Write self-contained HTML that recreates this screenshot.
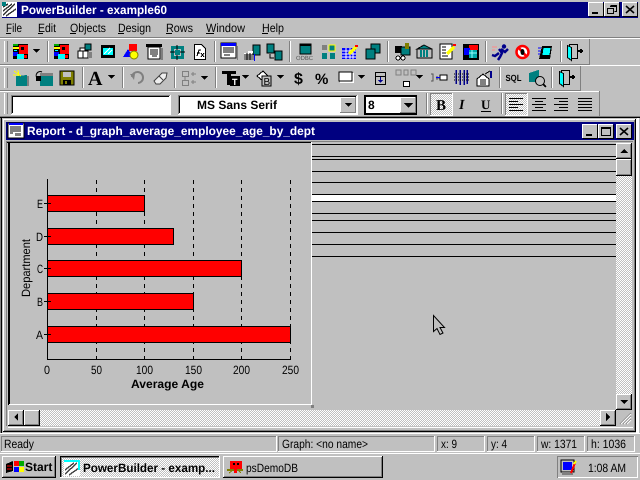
<!DOCTYPE html>
<html><head><meta charset="utf-8"><title>PowerBuilder</title>
<style>
html,body{margin:0;padding:0;background:#c0c0c0;width:640px;height:480px;overflow:hidden}
svg{display:block}
text{font-family:"Liberation Sans",sans-serif;font-size:11px;fill:#000;text-rendering:geometricPrecision}
.b{font-weight:bold}
.r,.t{shape-rendering:crispEdges}
</style></head><body>
<svg xmlns="http://www.w3.org/2000/svg" width="640" height="480" viewBox="0 0 640 480">
<defs>
<pattern id="d" width="2" height="2" patternUnits="userSpaceOnUse"><rect width="2" height="2" fill="#c0c0c0"/><rect width="1" height="1" fill="#fff"/><rect x="1" y="1" width="1" height="1" fill="#fff"/></pattern>
<g id="col"><rect width="15" height="15" fill="#000"/><rect x="6" y="1" width="9" height="9" fill="#f00"/><rect x="0" y="8" width="5" height="4" fill="#00f"/><rect x="4" y="10" width="7" height="5" fill="#0ff"/><rect x="0" y="3" width="6" height="2" fill="#ff0"/><rect x="0" y="0" width="5" height="2" fill="#0a0"/><rect x="8" y="3" width="3" height="3" fill="#000"/><rect x="11" y="11" width="3" height="3" fill="#f00"/><rect x="1" y="6" width="3" height="1" fill="#0ff"/></g>
<path id="ar" d="M0 0h7l-3.500 4z"/>
<g id="door"><rect x="3" y="0" width="9" height="15" fill="#808080"/><rect x="3.500" y=".5" width="8" height="14" fill="#c0c0c0" stroke="#000"/><path d="M1.500 1.500l4 2v13l-4-3z" fill="#0ff" stroke="#000"/><path d="M12 7h5M15 5v4" stroke="#000" stroke-width="2"/></g>
</defs>
<g class="r">
<rect width="640" height="480" fill="#c0c0c0"/>
<rect x="2" y="2" width="636" height="16" fill="#000080"/>
<rect x="2" y="2" width="15" height="15" fill="#fff"/><path d="M3 15L15 4M3 11l9-7M6 16l10-7M3 7l5-3" stroke="#333" stroke-width="1.400"/><rect x="2" y="2" width="4" height="4" fill="#008080"/>
<g><rect x="588" y="2" width="15" height="14" fill="#fff"/><rect x="589" y="3" width="15" height="14" fill="#000"/><rect x="589" y="3" width="14" height="13" fill="#c0c0c0"/><rect x="592" y="12" width="6" height="2" fill="#000"/></g>
<g><rect x="604" y="2" width="15" height="14" fill="#fff"/><rect x="605" y="3" width="15" height="14" fill="#000"/><rect x="605" y="3" width="14" height="13" fill="#c0c0c0"/><path d="M610.500 5.500h6v6h-2M607.500 8.500h6v5h-6zM610 6.500h6" fill="none" stroke="#000"/></g>
<g><rect x="622" y="2" width="15" height="14" fill="#fff"/><rect x="623" y="3" width="15" height="14" fill="#000"/><rect x="623" y="3" width="14" height="13" fill="#c0c0c0"/><path d="M626 6l8 7M634 6l-8 7" stroke="#000" stroke-width="1.600" shape-rendering="auto"/></g>
<rect x="0" y="37" width="640" height="1" fill="#808080"/><rect x="0" y="38" width="640" height="1" fill="#fff"/>
<rect x="589" y="39" width="1" height="26" fill="#808080"/><rect x="0" y="64" width="590" height="1" fill="#808080"/><rect x="0" y="65" width="640" height="1" fill="#fff"/>
<rect x="580" y="66" width="1" height="25" fill="#808080"/><rect x="0" y="90" width="581" height="1" fill="#808080"/><rect x="0" y="91" width="600" height="1" fill="#fff"/>
<rect x="599" y="91" width="1" height="25" fill="#808080"/>
<g><rect x="4" y="41" width="1" height="21" fill="#fff"/><rect x="7" y="41" width="1" height="21" fill="#808080"/><rect x="4" y="68" width="1" height="20" fill="#fff"/><rect x="7" y="68" width="1" height="20" fill="#808080"/><rect x="4" y="93" width="1" height="21" fill="#fff"/><rect x="7" y="93" width="1" height="21" fill="#808080"/></g>
<g fill="#808080"><rect x="47" y="41" width="1" height="21"/><rect x="214" y="41" width="1" height="21"/><rect x="289" y="41" width="1" height="21"/><rect x="387" y="41" width="1" height="21"/><rect x="485" y="41" width="1" height="21"/><rect x="560" y="41" width="1" height="21"/>
<rect x="82" y="67" width="1" height="21"/><rect x="122" y="67" width="1" height="21"/><rect x="174" y="67" width="1" height="21"/><rect x="215" y="67" width="1" height="21"/><rect x="499" y="67" width="1" height="21"/><rect x="551" y="67" width="1" height="21"/>
<rect x="426" y="93" width="1" height="21"/><rect x="501" y="93" width="1" height="21"/></g>
<g fill="#fff"><rect x="48" y="41" width="1" height="21"/><rect x="215" y="41" width="1" height="21"/><rect x="290" y="41" width="1" height="21"/><rect x="388" y="41" width="1" height="21"/><rect x="486" y="41" width="1" height="21"/><rect x="561" y="41" width="1" height="21"/>
<rect x="83" y="67" width="1" height="21"/><rect x="123" y="67" width="1" height="21"/><rect x="175" y="67" width="1" height="21"/><rect x="216" y="67" width="1" height="21"/><rect x="500" y="67" width="1" height="21"/><rect x="552" y="67" width="1" height="21"/>
<rect x="427" y="93" width="1" height="21"/><rect x="502" y="93" width="1" height="21"/></g>
</g>
<g class="r">
<use href="#col" x="13" y="44"/><use href="#ar" x="33" y="49"/>
<use href="#col" x="54" y="44"/>
<g transform="translate(77,44)"><path d="M1 7h5v7H1zM6 7h5v7H6zM3 4h6v3H3z" fill="#fff" stroke="#000"/><rect x="8" y="0" width="6" height="6" fill="#008080" stroke="#000"/><rect x="11" y="8" width="4" height="6" fill="#808080"/></g>
<g transform="translate(101,45)"><rect x="0" y="0" width="14" height="13" fill="#000"/><rect x="2" y="3" width="10" height="7" fill="#0ff"/><path d="M3 9l6-6M7 9l4-4" stroke="#fff"/></g>
<g transform="translate(123,43)"><rect x="6" y="1" width="8" height="7" fill="#f00"/><path d="M0 14l5-8 5 8z" fill="#00f"/><circle cx="11" cy="12" r="4" fill="#ff0" stroke="#808000" shape-rendering="auto"/></g>
<g transform="translate(146,44)"><rect x="0" y="0" width="16" height="3" fill="#000"/><rect x="2" y="3" width="12" height="12" fill="#fff" stroke="#000"/><path d="M4 6h8M4 8h8M4 10h8M6 12h5" stroke="#000"/><rect x="15" y="4" width="2" height="12" fill="#808080"/></g>
<g transform="translate(170,45)"><rect x="1" y="1" width="13" height="13" fill="#008080"/><rect x="4" y="4" width="7" height="7" fill="#c0c0c0"/><path d="M0 7h15M7 0v15" stroke="#000"/><rect x="5" y="5" width="5" height="5" fill="#008080"/></g>
<g transform="translate(194,44)"><path d="M.5.5h7l4 4v11H.5z" fill="#fff" stroke="#000"/><path d="M3 12l2-6h2M3 9h3M7 9l3 4M10 9l-3 4" stroke="#000" fill="none"/></g>
<g transform="translate(221,43)"><rect x="0" y="0" width="15" height="15" fill="#fff" stroke="#000"/><rect x="0" y="0" width="15" height="3" fill="#00f"/><path d="M2 5h11M2 7h11M2 9h11" stroke="#000"/><rect x="3" y="11" width="6" height="2" fill="#808080"/><rect x="16" y="3" width="1" height="14" fill="#808080"/></g>
<g transform="translate(244,44)"><rect x="0" y="9" width="10" height="7" fill="#fff"/><path d="M0 11h10M0 13h10M0 15h10M3 9v7M6 9v7" stroke="#000"/><rect x="9" y="1" width="7" height="10" fill="#008080" stroke="#000"/><rect x="4" y="7" width="5" height="2" fill="#fff"/><rect x="10" y="10" width="1" height="7" fill="#00f"/></g>
<g transform="translate(267,44)"><rect x="0" y="0" width="7" height="9" fill="#008080" stroke="#000"/><rect x="8" y="7" width="7" height="9" fill="#008080" stroke="#000"/><path d="M3 10v4h4" fill="none" stroke="#000"/></g>
<g transform="translate(299,44)"><rect x="1" y="0" width="11" height="10" fill="#008080" stroke="#000"/><rect x="1" y="0" width="11" height="2" fill="#000"/></g>
<g transform="translate(322,44)"><rect x="0" y="1" width="5" height="5" fill="#808080"/><rect x="7" y="1" width="6" height="6" fill="#008080" stroke="#ff0"/><rect x="0" y="9" width="5" height="6" fill="#008080"/><rect x="8" y="9" width="5" height="6" fill="#008080"/></g>
<g transform="translate(342,45)"><rect x="0" y="3" width="14" height="11" fill="#00f"/><path d="M0 6h14M0 9h14M0 12h14M4 3v11M8 3v11M11 3v11" stroke="#fff"/><path d="M7 9l7-7" stroke="#ff0" stroke-width="3"/><rect x="13" y="0" width="3" height="2" fill="#f00"/></g>
<g transform="translate(366,44)"><rect x="5" y="0" width="9" height="9" fill="#008080" stroke="#000"/><rect x="0" y="5" width="9" height="10" fill="#008080" stroke="#000"/></g>
<g transform="translate(395,43)"><rect x="0" y="3" width="7" height="7" fill="#000"/><rect x="6" y="4" width="9" height="8" fill="#008080" stroke="#000"/><rect x="10" y="0" width="4" height="6" fill="#808000"/><circle cx="3" cy="15" r="2" fill="#fff" stroke="#000"/><circle cx="8" cy="15" r="2" fill="#fff" stroke="#000"/></g>
<g transform="translate(417,44)"><path d="M0 5l7-4 8 4z" fill="#008080" stroke="#000"/><rect x="0" y="5" width="15" height="9" fill="#c0c0c0" stroke="#000"/><path d="M4 6v7M7 6v7M10 6v7" stroke="#008080" stroke-width="2"/></g>
<g transform="translate(440,44)"><rect x="0" y="0" width="12" height="15" fill="#fff" stroke="#000"/><path d="M2 3h4M2 6h4M2 9h4M2 12h6" stroke="#000"/><path d="M7 10l7-7" stroke="#ff0" stroke-width="3"/><rect x="13" y="0" width="3" height="2" fill="#f00"/></g>
<g transform="translate(463,44)"><rect width="16" height="16" fill="#000"/><rect x="6" y="1" width="9" height="5" fill="#f00"/><rect x="1" y="4" width="6" height="7" fill="#00f"/><rect x="6" y="6" width="8" height="8" fill="#0aa"/><path d="M6 9h8M9 6v8" stroke="#9ff"/></g>
<g transform="translate(492,44)" shape-rendering="auto"><path d="M7 5l3 4-2 4-2 3M7 9l-4 3-3-1M9 5l4 3 3-3" fill="none" stroke="#00008b" stroke-width="2.500"/><circle cx="12" cy="2.500" r="2.200" fill="#00008b"/><path d="M0 3h5M0 6h3" stroke="#f88"/></g>
<g transform="translate(515,44)" shape-rendering="auto"><circle cx="7.500" cy="8" r="6" fill="#fff" stroke="#f00" stroke-width="2.500"/><path d="M3 3l9 10" stroke="#f00" stroke-width="2.500"/><ellipse cx="7.500" cy="8" rx="2" ry="3" fill="#000"/></g>
<g transform="translate(538,45)"><path d="M4 1h10l-2 13H1z" fill="#000"/><path d="M5.500 3h7l-1 7h-7z" fill="#0ff"/><path d="M0 3h3M0 6h3M0 9h2" stroke="#00f"/></g>
<use href="#door" x="566" y="44"/>
</g>
<text x="296" y="60" textLength="17" lengthAdjust="spacingAndGlyphs" style="font-size:6px;fill:#555">ODBC</text>
<g class="r">
<g transform="translate(13,70)"><path d="M3 6l11-1v11H3z" fill="#008080"/><rect x="14" y="6" width="2" height="10" fill="#808080"/><path d="M1 1l7 5M5 0l1 6M0 5h7" stroke="#ff0"/></g>
<g transform="translate(36,70)"><rect x="4" y="3" width="13" height="13" fill="#008080"/><rect x="4" y="3" width="13" height="3" fill="#808080"/><path d="M1 8a4 4 0 0 1 5-6" fill="none" stroke="#000" shape-rendering="auto"/><rect x="0" y="6" width="5" height="5" fill="#000"/></g>
<g transform="translate(60,71)"><rect x="0" y="0" width="14" height="14" fill="#808000" stroke="#000"/><rect x="3" y="1" width="8" height="5" fill="#c0c0c0"/><rect x="3" y="9" width="8" height="5" fill="#000"/><rect x="5" y="10" width="2" height="3" fill="#808000"/></g>
<text x="88" y="85" class="b" style="font-family:'Liberation Serif',serif;font-size:20px">A</text><use href="#ar" x="108" y="75"/>
<g transform="translate(130,71)" shape-rendering="auto"><path d="M2 6a5 5 0 0 1 11 1c0 3-3 5-5 5" fill="none" stroke="#808080" stroke-width="2"/><path d="M0 3l5 0 -1 6z" fill="#808080"/></g>
<g transform="translate(153,71)" shape-rendering="auto"><path d="M1 10l8-8h5l-1 5-6 6H3z" fill="#eee" stroke="#404040"/><path d="M6 5l4 4" stroke="#404040"/></g>
<g transform="translate(182,71)" fill="none" stroke="#808080"><rect x=".5" y=".5" width="6" height="5"/><rect x=".5" y="9.500" width="6" height="5"/><path d="M9 3h5M11 1v4M9 11h5M11 9v4M3 6v3"/></g>
<use href="#ar" x="201" y="76" fill="#000"/>
<g transform="translate(222,71)"><path d="M0 0h14v3H9v11H5V3H0z" fill="#000"/><rect x="8" y="5" width="10" height="10" fill="#000"/><text x="10" y="14" class="b" style="fill:#fff;font-size:9px">T</text></g><use href="#ar" x="242" y="75"/>
<g transform="translate(256,70)"><path d="M1 6l6-5 5 5-5 5z" fill="#fff" stroke="#000"/><rect x="6" y="6" width="9" height="10" fill="#c0c0c0" stroke="#000"/><text x="7.500" y="15" style="font-size:10px">B</text></g><use href="#ar" x="277" y="75"/>
<text x="294" y="84" class="b" style="font-size:16px">$</text>
<text x="315" y="84" class="b" style="font-size:15px">%</text>
<g><rect x="339" y="72" width="14" height="10" fill="#808080"/><rect x="340" y="73" width="14" height="10" fill="#fff"/><rect x="339" y="72" width="13" height="9" fill="#fff" stroke="#000"/></g><use href="#ar" x="358" y="75"/>
<g transform="translate(375,72)"><rect x=".5" y=".5" width="10" height="12" fill="#c0c0c0" stroke="#000"/><path d="M.5 4.500h10" stroke="#000"/><path d="M5.500 5v4" stroke="#00008b"/><path d="M3 8h5l-2.500 3z" fill="#00008b"/></g>
<g transform="translate(396,70)"><path d="M0 0h5v5H0zM8 0h4v5H8zM15 0h5v5h-5z" fill="none" stroke="#808080"/><rect x="7.500" y="11.500" width="6" height="5" fill="#fff" stroke="#000"/></g><use href="#ar" x="416" y="75"/>
<g transform="translate(431,73)"><path d="M0 1h2v7H0M5 5h4M6 3v4" stroke="#555" fill="none"/><rect x="9" y="2" width="7" height="5" fill="#fff" stroke="#000"/><path d="M5 4.500h4" stroke="#00f"/></g>
<g transform="translate(454,70)" fill="none" stroke="#00008b"><path d="M2 0v14M6 0v15M10 0v15M13 0v14" stroke-width="1.500"/><path d="M0 4h15M0 7h15M0 10h15" stroke="#000" stroke-dasharray="1 1"/></g>
<g transform="translate(477,71)"><path d="M0 8l6-5 6 5v7H0z" fill="#fff" stroke="#000"/><path d="M3 9h6M3 11h6M3 13h6" stroke="#000"/><path d="M8 3l5-3" stroke="#000"/><rect x="13" y="0" width="2" height="7" fill="#00008b"/></g>
<text x="505.500" y="81" class="b" textLength="16" lengthAdjust="spacingAndGlyphs" style="font-size:9px">SQL</text>
<g transform="translate(529,70)"><path d="M0 3l9-3h5v12H0z" fill="#008080"/><path d="M10 0h4v8h-4z" fill="#c0c0c0"/><circle cx="11" cy="11" r="4.500" fill="#c0c0c0" stroke="#000" shape-rendering="auto"/><path d="M14 14l3 3" stroke="#000" stroke-width="2"/></g>
<use href="#door" x="558" y="70"/>
</g>
<g class="r">
<rect x="11" y="95" width="160" height="20" fill="#fff"/><rect x="11" y="95" width="159" height="1" fill="#808080"/><rect x="11" y="95" width="1" height="19" fill="#808080"/><rect x="12" y="96" width="157" height="1" fill="#000"/><rect x="12" y="96" width="1" height="17" fill="#000"/>
<rect x="178" y="95" width="180" height="20" fill="#fff"/><rect x="178" y="95" width="179" height="1" fill="#808080"/><rect x="178" y="95" width="1" height="19" fill="#808080"/><rect x="179" y="96" width="177" height="1" fill="#000"/><rect x="179" y="96" width="1" height="17" fill="#000"/>
<rect x="340" y="97" width="16" height="16" fill="#808080"/><rect x="340" y="97" width="15" height="15" fill="#fff"/><rect x="341" y="98" width="14" height="14" fill="#c0c0c0"/><path d="M345 103h7l-3.500 4z"/>
<rect x="364" y="95" width="53" height="20" fill="#000"/><rect x="366" y="97" width="49" height="16" fill="#fff"/>
<rect x="400" y="97" width="16" height="16" fill="#808080"/><rect x="400" y="97" width="15" height="15" fill="#fff"/><rect x="401" y="98" width="14" height="14" fill="#c0c0c0"/><path d="M404 103h9l-4.500 5z"/>
<rect x="430" y="93" width="23" height="23" fill="#fff"/><rect x="430" y="93" width="22" height="22" fill="#808080"/><rect x="431" y="94" width="21" height="21" fill="url(#d)"/>
<rect x="505" y="93" width="23" height="23" fill="#fff"/><rect x="505" y="93" width="22" height="22" fill="#808080"/><rect x="506" y="94" width="21" height="21" fill="url(#d)"/>
<path d="M509 98h14M509 101h9M509 104h14M509 107h9M509 110h14M532 98h14M535 101h8M532 104h14M535 107h8M532 110h14M554 98h14M559 101h9M554 104h14M559 107h9M554 110h14M578 98h14M578 101h14M578 104h14M578 107h14M578 110h14" stroke="#000" transform="translate(0,.5)"/>
</g>
<text x="197" y="109" style="font-size:12px;font-weight:bold" textLength="80" lengthAdjust="spacingAndGlyphs">MS Sans Serif</text>
<text x="368" y="109" class="b" style="font-size:12px">8</text>
<text x="436" y="110" class="b" style="font-family:'Liberation Serif',serif;font-size:15px">B</text>
<text x="459" y="109" class="b" style="font-family:'Liberation Serif',serif;font-size:14px;font-style:italic">I</text>
<text x="481" y="109" class="b" style="font-family:'Liberation Serif',serif;font-size:13px">U</text>
<rect x="481" y="111" width="10" height="1" class="r"/>
<g class="r">
<rect x="0" y="116" width="640" height="1" fill="#808080"/><rect x="0" y="117" width="640" height="1" fill="#000"/>
<rect x="0" y="118" width="2" height="316" fill="#808080"/><rect x="1" y="118" width="1" height="316" fill="#000"/>
<rect x="636" y="118" width="3" height="316" fill="#fff"/>
<rect x="2" y="118" width="635" height="1" fill="#c0c0c0"/><rect x="3" y="119" width="633" height="1" fill="#fff"/><rect x="3" y="119" width="1" height="312" fill="#fff"/>
<rect x="635" y="119" width="1" height="313" fill="#000"/><rect x="3" y="431" width="633" height="1" fill="#000"/><rect x="4" y="430" width="631" height="1" fill="#808080"/><rect x="634" y="120" width="1" height="311" fill="#808080"/>
<rect x="0" y="433" width="640" height="1" fill="#fff"/>
<rect x="6" y="122" width="628" height="18" fill="#000080"/>
<g transform="translate(8,123)"><rect x="0" y="0" width="16" height="15" fill="#fff" stroke="#000"/><rect x="1" y="0" width="14" height="2" fill="#00f"/><path d="M2 4h11M2 6h11M2 8h11M2 10h3" stroke="#000"/><rect x="7" y="10" width="6" height="3" fill="#808080"/></g>
<g><rect x="582" y="124" width="15" height="14" fill="#fff"/><rect x="583" y="125" width="15" height="14" fill="#000"/><rect x="583" y="125" width="14" height="13" fill="#c0c0c0"/><rect x="586" y="134" width="6" height="2" fill="#000"/></g>
<g><rect x="598" y="124" width="15" height="14" fill="#fff"/><rect x="599" y="125" width="15" height="14" fill="#000"/><rect x="599" y="125" width="14" height="13" fill="#c0c0c0"/><path d="M601.500 127.500h9v8h-9zM601 128.500h10" fill="none" stroke="#000"/></g>
<g><rect x="616" y="124" width="15" height="14" fill="#fff"/><rect x="617" y="125" width="15" height="14" fill="#000"/><rect x="617" y="125" width="14" height="13" fill="#c0c0c0"/><path d="M620 128l8 7M628 128l-8 7" stroke="#000" stroke-width="1.600" shape-rendering="auto"/></g>
<rect x="6" y="141" width="627" height="1" fill="#808080"/><rect x="7" y="142" width="305" height="1" fill="#000"/><rect x="6" y="141" width="1" height="285" fill="#808080"/><rect x="8" y="142" width="2" height="263" fill="#000"/>
<rect x="311" y="142" width="1" height="263" fill="#fff"/><rect x="9" y="404" width="303" height="1" fill="#fff"/><rect x="311" y="405" width="3" height="3" fill="#808080"/>
<g fill="#000"><rect x="312" y="144" width="304" height="1"/><rect x="312" y="156" width="304" height="1"/><rect x="312" y="159" width="304" height="1"/><rect x="312" y="171" width="304" height="1"/><rect x="312" y="182" width="304" height="1"/><rect x="312" y="194" width="304" height="1"/><rect x="312" y="201" width="304" height="1"/><rect x="312" y="213" width="304" height="1"/><rect x="312" y="220" width="304" height="1"/><rect x="312" y="232" width="304" height="1"/><rect x="312" y="244" width="304" height="1"/><rect x="312" y="256" width="304" height="1"/></g>
<rect x="312" y="195" width="304" height="6" fill="#fff"/>
<rect x="616" y="143" width="16" height="266" fill="url(#d)"/>
<g><rect x="616" y="143" width="16" height="16" fill="#000"/><rect x="616" y="143" width="15" height="15" fill="#fff"/><rect x="617" y="144" width="14" height="14" fill="#808080"/><rect x="617" y="144" width="13" height="13" fill="#c0c0c0"/><path d="M620 153h8l-4-4z"/></g>
<g><rect x="616" y="159" width="16" height="17" fill="#000"/><rect x="616" y="159" width="15" height="16" fill="#fff"/><rect x="617" y="160" width="14" height="15" fill="#808080"/><rect x="617" y="160" width="13" height="14" fill="#c0c0c0"/></g>
<g><rect x="616" y="394" width="16" height="16" fill="#000"/><rect x="616" y="394" width="15" height="15" fill="#fff"/><rect x="617" y="395" width="14" height="14" fill="#808080"/><rect x="617" y="395" width="13" height="13" fill="#c0c0c0"/><path d="M620 400h8l-4 4z"/></g>
<rect x="8" y="410" width="608" height="16" fill="url(#d)"/>
<g><rect x="8" y="410" width="16" height="16" fill="#000"/><rect x="8" y="410" width="15" height="15" fill="#fff"/><rect x="9" y="411" width="14" height="14" fill="#808080"/><rect x="9" y="411" width="13" height="13" fill="#c0c0c0"/><path d="M18 413v8l-4-4z"/></g>
<g><rect x="24" y="410" width="16" height="16" fill="#000"/><rect x="24" y="410" width="15" height="15" fill="#fff"/><rect x="25" y="411" width="14" height="14" fill="#808080"/><rect x="25" y="411" width="13" height="13" fill="#c0c0c0"/></g>
<g><rect x="600" y="410" width="16" height="16" fill="#000"/><rect x="600" y="410" width="15" height="15" fill="#fff"/><rect x="601" y="411" width="14" height="14" fill="#808080"/><rect x="601" y="411" width="13" height="13" fill="#c0c0c0"/><path d="M606 413v8l4-4z"/></g>
<path d="M620 424l11-11M623 424l8-8M626 424l5-5" stroke="#808080" shape-rendering="auto"/><path d="M621 424l10-10M624 424l7-7M627 424l4-4" stroke="#fff" shape-rendering="auto"/>
<rect x="8" y="426" width="626" height="2" fill="#c0c0c0"/><rect x="8" y="427" width="625" height="1" fill="#fff"/>
<g stroke="#000" stroke-dasharray="4 4" fill="none"><path d="M96.500 180v179M144.500 180v179M193.500 180v179M241.500 180v179M290.500 180v179"/></g>
<g fill="#f00" stroke="#000"><rect x="47.500" y="195.500" width="97" height="16"/><rect x="47.500" y="228.500" width="126" height="16"/><rect x="47.500" y="260.500" width="194" height="16"/><rect x="47.500" y="293.500" width="146" height="16"/><rect x="47.500" y="326.500" width="243" height="16"/></g>
<path d="M47.500 179v181M47 359.500h244M44 203.500h7M44 236.500h7M44 268.500h7M44 301.500h7M44 334.500h7" stroke="#000" fill="none"/>
</g>
<text x="21" y="14" class="b" style="fill:#fff;font-size:12px" textLength="146" lengthAdjust="spacingAndGlyphs">PowerBuilder - example60</text>
<g>
<text x="6" y="32" style="font-size:12px" textLength="16" lengthAdjust="spacingAndGlyphs">File</text><text x="38" y="32" style="font-size:12px" textLength="18" lengthAdjust="spacingAndGlyphs">Edit</text><text x="70" y="32" style="font-size:12px" textLength="36" lengthAdjust="spacingAndGlyphs">Objects</text><text x="118" y="32" style="font-size:12px" textLength="33" lengthAdjust="spacingAndGlyphs">Design</text><text x="166" y="32" style="font-size:12px" textLength="27" lengthAdjust="spacingAndGlyphs">Rows</text><text x="206" y="32" style="font-size:12px" textLength="39" lengthAdjust="spacingAndGlyphs">Window</text><text x="262" y="32" style="font-size:12px" textLength="22" lengthAdjust="spacingAndGlyphs">Help</text>
</g>
<path d="M6 33.500h5M38 33.500h5M70 33.500h6M118 33.500h6M166 33.500h6M206 33.500h8M262 33.500h6" stroke="#000" class="r"/>
<text x="27" y="135" class="b" style="fill:#fff;font-size:12px" textLength="288" lengthAdjust="spacingAndGlyphs">Report - d_graph_average_employee_age_by_dept</text>
<g>
<text x="37" y="208" style="font-size:12px" textLength="6" lengthAdjust="spacingAndGlyphs">E</text><text x="36" y="241" style="font-size:12px" textLength="7" lengthAdjust="spacingAndGlyphs">D</text><text x="37" y="273" style="font-size:12px" textLength="6" lengthAdjust="spacingAndGlyphs">C</text><text x="37" y="306" style="font-size:12px" textLength="6" lengthAdjust="spacingAndGlyphs">B</text><text x="36" y="339" style="font-size:12px" textLength="7" lengthAdjust="spacingAndGlyphs">A</text>
<text x="44" y="374" style="font-size:12px" textLength="6" lengthAdjust="spacingAndGlyphs">0</text><text x="91" y="374" style="font-size:12px" textLength="11" lengthAdjust="spacingAndGlyphs">50</text><text x="136" y="374" style="font-size:12px" textLength="17" lengthAdjust="spacingAndGlyphs">100</text><text x="185" y="374" style="font-size:12px" textLength="17" lengthAdjust="spacingAndGlyphs">150</text><text x="233" y="374" style="font-size:12px" textLength="17" lengthAdjust="spacingAndGlyphs">200</text><text x="282" y="374" style="font-size:12px" textLength="17" lengthAdjust="spacingAndGlyphs">250</text>
</g>
<text x="131" y="388" class="b" style="font-size:12px" textLength="73" lengthAdjust="spacingAndGlyphs">Average Age</text>
<text transform="translate(30,297) rotate(-90)" style="font-size:12px" textLength="58" lengthAdjust="spacingAndGlyphs">Department</text>
<path d="M433.500 315.500v16l3.500-3 3 6 3-1.500-3-5.500h4.500z" fill="#c0c0c0" stroke="#000"/>
<g class="r">
<g fill="#808080"><rect x="1" y="436" width="275" height="1"/><rect x="1" y="436" width="1" height="16"/><rect x="278" y="436" width="156" height="1"/><rect x="278" y="436" width="1" height="16"/><rect x="437" y="436" width="47" height="1"/><rect x="437" y="436" width="1" height="16"/><rect x="487" y="436" width="47" height="1"/><rect x="487" y="436" width="1" height="16"/><rect x="537" y="436" width="47" height="1"/><rect x="537" y="436" width="1" height="16"/><rect x="587" y="436" width="47" height="1"/><rect x="587" y="436" width="1" height="16"/></g>
<g fill="#fff"><rect x="1" y="451" width="276" height="1"/><rect x="276" y="436" width="1" height="16"/><rect x="278" y="451" width="157" height="1"/><rect x="434" y="436" width="1" height="16"/><rect x="437" y="451" width="48" height="1"/><rect x="484" y="436" width="1" height="16"/><rect x="487" y="451" width="48" height="1"/><rect x="534" y="436" width="1" height="16"/><rect x="537" y="451" width="48" height="1"/><rect x="584" y="436" width="1" height="16"/><rect x="587" y="451" width="48" height="1"/><rect x="634" y="436" width="1" height="16"/></g>
<rect x="0" y="453" width="640" height="1" fill="#fff"/>
<g><rect x="2" y="456" width="54" height="22" fill="#000"/><rect x="2" y="456" width="53" height="21" fill="#fff"/><rect x="3" y="457" width="52" height="20" fill="#808080"/><rect x="3" y="457" width="51" height="19" fill="#c0c0c0"/></g>
<g transform="translate(6,460)"><path d="M0 4l7-3v10l-7 2z" fill="#000"/><rect x="8" y="1" width="5" height="5" fill="#f00"/><rect x="13" y="1" width="5" height="5" fill="#0a0"/><rect x="8" y="7" width="5" height="5" fill="#00f"/><rect x="13" y="7" width="5" height="5" fill="#ff0"/><path d="M1 6h5M1 9h5" stroke="#f00"/></g>
<g><rect x="60" y="456" width="160" height="22" fill="#fff"/><rect x="60" y="456" width="159" height="21" fill="#000"/><rect x="61" y="457" width="158" height="20" fill="#808080"/><rect x="62" y="458" width="157" height="19" fill="url(#d)"/></g>
<g transform="translate(64,460)"><rect width="16" height="16" fill="#fff"/><path d="M1 14L13 3M1 10l9-7M5 15l10-7" stroke="#444" stroke-width="1.400"/><rect width="16" height="2" fill="#0ff"/><rect x="14" y="0" width="2" height="10" fill="#0ff"/></g>
<g><rect x="223" y="456" width="160" height="22" fill="#000"/><rect x="223" y="456" width="159" height="21" fill="#fff"/><rect x="224" y="457" width="158" height="20" fill="#808080"/><rect x="224" y="457" width="157" height="19" fill="#c0c0c0"/></g>
<g transform="translate(227,460)"><rect x="3" y="1" width="12" height="8" fill="#f00"/><rect x="6" y="3" width="2" height="2"/><rect x="10" y="3" width="2" height="2"/><rect x="0" y="9" width="16" height="2" fill="#808000"/><path d="M2 13l4-3h5l3 3" stroke="#808000" fill="none"/><rect x="7" y="9" width="3" height="4" fill="#f00"/></g>
<rect x="557" y="456" width="81" height="1" fill="#808080"/><rect x="557" y="456" width="1" height="22" fill="#808080"/><rect x="558" y="477" width="80" height="1" fill="#fff"/><rect x="637" y="457" width="1" height="21" fill="#fff"/>
<g transform="translate(561,460)"><rect x="0" y="0" width="13" height="12" fill="#c0c0c0" stroke="#000"/><rect x="2" y="2" width="9" height="8" fill="#00f"/><rect x="1" y="12" width="11" height="3" fill="#808080"/><path d="M10 13l4-10" stroke="#f00" stroke-width="2"/><path d="M13 4l2-3" stroke="#ff0" stroke-width="2"/></g>
</g>
<text x="4" y="448" style="font-size:12px" textLength="30" lengthAdjust="spacingAndGlyphs">Ready</text>
<text x="282" y="448" style="font-size:12px" textLength="86" lengthAdjust="spacingAndGlyphs">Graph: &lt;no name&gt;</text>
<text x="441" y="448" style="font-size:12px" textLength="16" lengthAdjust="spacingAndGlyphs">x: 9</text><text x="491" y="448" style="font-size:12px" textLength="16" lengthAdjust="spacingAndGlyphs">y: 4</text><text x="541" y="448" style="font-size:12px" textLength="36" lengthAdjust="spacingAndGlyphs">w: 1371</text><text x="591" y="448" style="font-size:12px" textLength="35" lengthAdjust="spacingAndGlyphs">h: 1036</text>
<text x="25" y="471" class="b" style="font-size:12px">Start</text>
<text x="83" y="472" class="b" style="font-size:12px" textLength="132" lengthAdjust="spacingAndGlyphs">PowerBuilder - examp...</text>
<text x="246" y="472" style="font-size:12px" textLength="52" lengthAdjust="spacingAndGlyphs">psDemoDB</text>
<text x="588" y="472" style="font-size:12px" textLength="38" lengthAdjust="spacingAndGlyphs">1:08 AM</text>
</svg>
</body></html>
